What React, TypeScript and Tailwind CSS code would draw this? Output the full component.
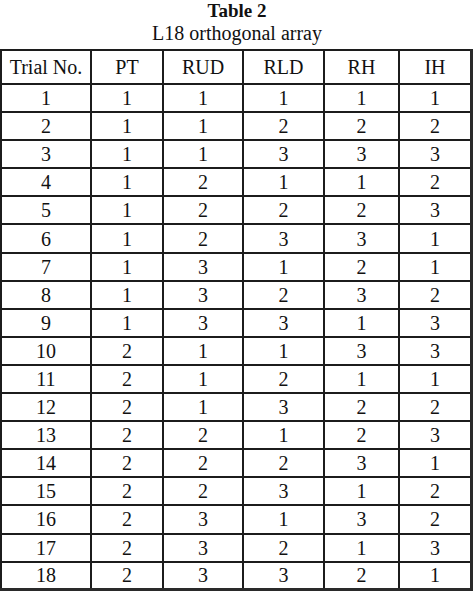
import React from "react";

const rows: number[][] = [
  [1, 1, 1, 1, 1, 1],
  [2, 1, 1, 2, 2, 2],
  [3, 1, 1, 3, 3, 3],
  [4, 1, 2, 1, 1, 2],
  [5, 1, 2, 2, 2, 3],
  [6, 1, 2, 3, 3, 1],
  [7, 1, 3, 1, 2, 1],
  [8, 1, 3, 2, 3, 2],
  [9, 1, 3, 3, 1, 3],
  [10, 2, 1, 1, 3, 3],
  [11, 2, 1, 2, 1, 1],
  [12, 2, 1, 3, 2, 2],
  [13, 2, 2, 1, 2, 3],
  [14, 2, 2, 2, 3, 1],
  [15, 2, 2, 3, 1, 2],
  [16, 2, 3, 1, 3, 2],
  [17, 2, 3, 2, 1, 3],
  [18, 2, 3, 3, 2, 1],
];

const headers = ["Trial No.", "PT", "RUD", "RLD", "RH", "IH"];

export default function App() {
  return (
    <div
      className="w-[474px] h-[594px] bg-white text-[#111] overflow-hidden"
      style={{ fontFamily: '"Liberation Serif", "Times New Roman", serif' }}
    >
      <div className="text-center font-bold text-[19px] leading-[20px] pt-[1px]">Table 2</div>
      <div className="text-center text-[20px] leading-[24px]">L18 orthogonal array</div>
      <div className="mt-[4px] pr-[1px]">
        <table className="w-full table-fixed border-collapse text-[20px] border-r-[3px] border-b-[3px] border-[#2a2a2a]">
          <colgroup>
            <col className="w-[90px]" />
            <col className="w-[72px]" />
            <col className="w-[80px]" />
            <col className="w-[81px]" />
            <col className="w-[75px]" />
            <col />
          </colgroup>
          <thead>
            <tr className="h-[34px]">
              {headers.map((h) => (
                <th
                  key={h}
                  className="border-[2.5px] border-[#1c1c1c] font-normal text-center p-0 leading-[22px]"
                >
                  {h}
                </th>
              ))}
            </tr>
          </thead>
          <tbody>
            {rows.map((r) => (
              <tr key={r[0]} className="h-[28.1px]">
                {r.map((v, i) => (
                  <td
                    key={i}
                    className="border-[2.5px] border-[#1c1c1c] text-center p-0 leading-[22px]"
                  >
                    {v}
                  </td>
                ))}
              </tr>
            ))}
          </tbody>
        </table>
      </div>
    </div>
  );
}
